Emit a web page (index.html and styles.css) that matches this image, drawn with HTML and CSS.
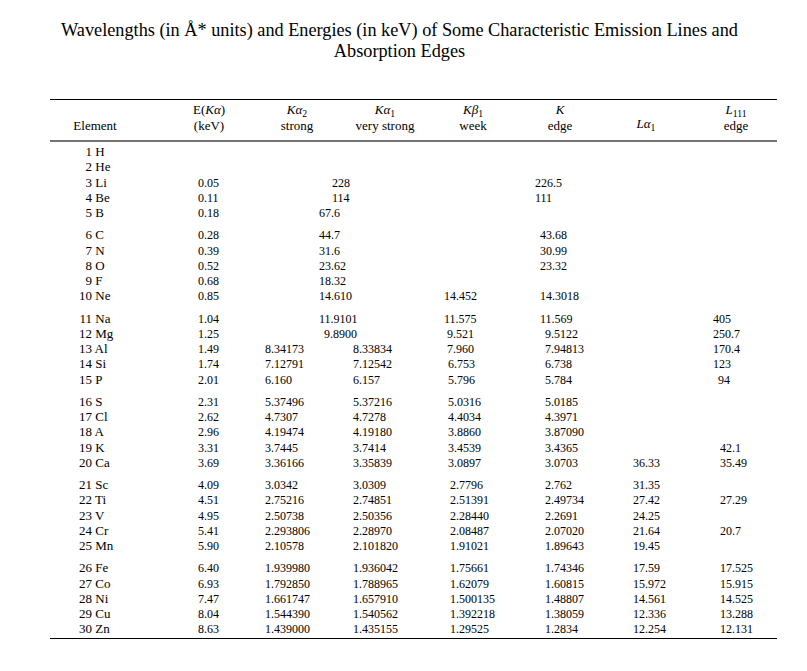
FILE: index.html
```html
<!DOCTYPE html>
<html lang="en">
<head>
<meta charset="utf-8">
<title>Wavelengths and Energies</title>
<link rel="stylesheet" href="styles.css">
</head>
<body>
<div class="title">Wavelengths (in Å* units) and Energies (in keV) of Some Characteristic Emission Lines and Absorption Edges</div>
<table class="data">
<colgroup>
<col class="w0"><col class="w1"><col class="w2"><col class="w3"><col class="w4"><col class="w5"><col class="w6"><col class="w7">
</colgroup>
<thead>
<tr>
<th><div class="h h0">Element</div></th>
<th><div class="h h1">E(<i>Kα</i>)<br>(keV)</div></th>
<th><div class="h h2"><i>Kα</i><sub>2</sub><br>strong</div></th>
<th><div class="h h3"><i>Kα</i><sub>1</sub><br>very strong</div></th>
<th><div class="h h4"><i>Kβ</i><sub>1</sub><br>week</div></th>
<th><div class="h h5"><i>K</i><br>edge</div></th>
<th><div class="h h6 la"><i>Lα</i><sub>1</sub></div></th>
<th><div class="h h7"><i>L</i><sub>111</sub><br>edge</div></th>
</tr>
</thead>
<tbody>
<tr><td class="el"><span class="et"><span class="num">1</span> H</span></td><td></td><td></td><td></td><td></td><td></td><td></td><td></td></tr>
<tr><td class="el"><span class="et"><span class="num">2</span> He</span></td><td></td><td></td><td></td><td></td><td></td><td></td><td></td></tr>
<tr><td class="el"><span class="et"><span class="num">3</span> Li</span></td><td>0.05</td><td colspan="2" class="s67">228</td><td></td><td>226.5</td><td></td><td></td></tr>
<tr><td class="el"><span class="et"><span class="num">4</span> Be</span></td><td>0.11</td><td colspan="2" class="s67">114</td><td></td><td>111</td><td></td><td></td></tr>
<tr><td class="el"><span class="et"><span class="num">5</span> B</span></td><td>0.18</td><td colspan="2" class="s54">67.6</td><td></td><td></td><td></td><td></td></tr>

<tr class="gs"><td class="el"><span class="et"><span class="num">6</span> C</span></td><td>0.28</td><td colspan="2" class="s54">44.7</td><td></td><td class="p5">43.68</td><td></td><td></td></tr>
<tr><td class="el"><span class="et"><span class="num">7</span> N</span></td><td>0.39</td><td colspan="2" class="s54">31.6</td><td></td><td class="p5">30.99</td><td></td><td></td></tr>
<tr><td class="el"><span class="et"><span class="num">8</span> O</span></td><td>0.52</td><td colspan="2" class="s54">23.62</td><td></td><td class="p5">23.32</td><td></td><td></td></tr>
<tr><td class="el"><span class="et"><span class="num">9</span> F</span></td><td>0.68</td><td colspan="2" class="s54">18.32</td><td></td><td></td><td></td><td></td></tr>
<tr><td class="el"><span class="et"><span class="num">10</span> Ne</span></td><td>0.85</td><td colspan="2" class="s54">14.610</td><td>14.452</td><td class="p5">14.3018</td><td></td><td></td></tr>

<tr class="gs"><td class="el"><span class="et"><span class="num">11</span> Na</span></td><td>1.04</td><td colspan="2" class="s54">11.9101</td><td>11.575</td><td class="p5">11.569</td><td></td><td>405</td></tr>
<tr><td class="el"><span class="et"><span class="num">12</span> Mg</span></td><td>1.25</td><td colspan="2" class="s59">9.8900</td><td class="p3">9.521</td><td class="p10">9.5122</td><td></td><td>250.7</td></tr>
<tr><td class="el"><span class="et"><span class="num">13</span> Al</span></td><td>1.49</td><td>8.34173</td><td>8.33834</td><td class="p3">7.960</td><td class="p10">7.94813</td><td></td><td>170.4</td></tr>
<tr><td class="el"><span class="et"><span class="num">14</span> Si</span></td><td>1.74</td><td>7.12791</td><td>7.12542</td><td class="p4">6.753</td><td class="p10">6.738</td><td></td><td>123</td></tr>
<tr><td class="el"><span class="et"><span class="num">15</span> P</span></td><td>2.01</td><td>6.160</td><td>6.157</td><td class="p4">5.796</td><td class="p10">5.784</td><td></td><td class="p5">94</td></tr>

<tr class="gs"><td class="el"><span class="et"><span class="num">16</span> S</span></td><td>2.31</td><td>5.37496</td><td>5.37216</td><td class="p4">5.0316</td><td class="p10">5.0185</td><td></td><td></td></tr>
<tr><td class="el"><span class="et"><span class="num">17</span> Cl</span></td><td>2.62</td><td>4.7307</td><td>4.7278</td><td class="p4">4.4034</td><td class="p10">4.3971</td><td></td><td></td></tr>
<tr><td class="el"><span class="et"><span class="num">18</span> A</span></td><td>2.96</td><td>4.19474</td><td>4.19180</td><td class="p4">3.8860</td><td class="p10">3.87090</td><td></td><td></td></tr>
<tr><td class="el"><span class="et"><span class="num">19</span> K</span></td><td>3.31</td><td>3.7445</td><td>3.7414</td><td class="p4">3.4539</td><td class="p10">3.4365</td><td></td><td class="p7">42.1</td></tr>
<tr><td class="el"><span class="et"><span class="num">20</span> Ca</span></td><td>3.69</td><td>3.36166</td><td>3.35839</td><td class="p4">3.0897</td><td class="p10">3.0703</td><td>36.33</td><td class="p7">35.49</td></tr>

<tr class="gs"><td class="el"><span class="et"><span class="num">21</span> Sc</span></td><td>4.09</td><td>3.0342</td><td>3.0309</td><td class="p6">2.7796</td><td class="p10">2.762</td><td>31.35</td><td></td></tr>
<tr><td class="el"><span class="et"><span class="num">22</span> Ti</span></td><td>4.51</td><td>2.75216</td><td>2.74851</td><td class="p6">2.51391</td><td class="p10">2.49734</td><td>27.42</td><td class="p7">27.29</td></tr>
<tr><td class="el"><span class="et"><span class="num">23</span> V</span></td><td>4.95</td><td>2.50738</td><td>2.50356</td><td class="p6">2.28440</td><td class="p10">2.2691</td><td>24.25</td><td></td></tr>
<tr><td class="el"><span class="et"><span class="num">24</span> Cr</span></td><td>5.41</td><td>2.293806</td><td>2.28970</td><td class="p6">2.08487</td><td class="p10">2.07020</td><td>21.64</td><td class="p7">20.7</td></tr>
<tr><td class="el"><span class="et"><span class="num">25</span> Mn</span></td><td>5.90</td><td>2.10578</td><td>2.101820</td><td class="p6">1.91021</td><td class="p10">1.89643</td><td>19.45</td><td></td></tr>

<tr class="gs"><td class="el"><span class="et"><span class="num">26</span> Fe</span></td><td>6.40</td><td>1.939980</td><td>1.936042</td><td class="p6">1.75661</td><td class="p10">1.74346</td><td>17.59</td><td class="p7">17.525</td></tr>
<tr><td class="el"><span class="et"><span class="num">27</span> Co</span></td><td>6.93</td><td>1.792850</td><td>1.788965</td><td class="p6">1.62079</td><td class="p10">1.60815</td><td>15.972</td><td class="p7">15.915</td></tr>
<tr><td class="el"><span class="et"><span class="num">28</span> Ni</span></td><td>7.47</td><td>1.661747</td><td>1.657910</td><td class="p6">1.500135</td><td class="p10">1.48807</td><td>14.561</td><td class="p7">14.525</td></tr>
<tr><td class="el"><span class="et"><span class="num">29</span> Cu</span></td><td>8.04</td><td>1.544390</td><td>1.540562</td><td class="p6">1.392218</td><td class="p10">1.38059</td><td>12.336</td><td class="p7">13.288</td></tr>
<tr><td class="el"><span class="et"><span class="num">30</span> Zn</span></td><td>8.63</td><td>1.439000</td><td>1.435155</td><td class="p6">1.29525</td><td class="p10">1.2834</td><td>12.254</td><td class="p7">12.131</td></tr>
</tbody>
</table>
</body>
</html>
```
FILE: styles.css
```css
html, body {
  margin: 0;
  padding: 0;
  background: #ffffff;
}

body {
  color: #000000;
  font-family: "Liberation Serif", "Times New Roman", serif;
}

.title {
  width: 700px;
  margin: 19.5px 0 0 49.5px;
  font-size: 18.25px;
  line-height: 21px;
  text-align: center;
}

.data {
  margin: 37.5px 0 0 50px;
  width: 727px;
  table-layout: fixed;
  border-collapse: collapse;
  border-top: 1px solid #000000;
  border-bottom: 1px solid #000000;
  font-size: 12px;
}

.w0 { width: 148px; }
.w1 { width: 67px; }
.w2 { width: 88px; }
.w3 { width: 91px; }
.w4 { width: 91px; }
.w5 { width: 98px; }
.w6 { width: 80px; }
.w7 { width: 64px; }

.data thead th {
  font-weight: normal;
  font-size: 13px;
  line-height: 16px;
  padding: 2px 0 6px;
  border-bottom: 2px solid #737373;
  vertical-align: bottom;
  text-align: center;
}

.h { text-align: center; white-space: nowrap; }
.h0 { margin-right: 58px; }
.h1 { margin-left: -45px; }
.h2 { margin-left: -24px; }
.h3 { margin-left: -27px; }
.h4 { margin-left: -33px; }
.h5 { margin-left: -48px; }
.h6 { margin-left: -54px; }
.h7 { margin-left: -18px; }
.la { padding-bottom: 2px; }

sub {
  font-size: 0.75em;
  line-height: 0;
  vertical-align: -0.3em;
}

.data td {
  padding: 0;
  line-height: 15.25px;
  text-align: left;
  white-space: nowrap;
  vertical-align: top;
}

.data tbody tr:first-child td { padding-top: 3px; }
.data tbody tr.gs td { padding-top: 7px; }

.data td.el { padding-left: 27px; }
.et {
  font-size: 13px;
  line-height: 13px;
}
.num {
  display: inline-block;
  width: 15px;
  text-align: right;
}

.data td.s54 { padding-left: 54px; }
.data td.s59 { padding-left: 59px; }
.data td.s67 { padding-left: 67px; }
.data td.p3 { padding-left: 3px; }
.data td.p4 { padding-left: 4px; }
.data td.p5 { padding-left: 5px; }
.data td.p6 { padding-left: 6px; }
.data td.p7 { padding-left: 7px; }
.data td.p10 { padding-left: 10px; }
```
